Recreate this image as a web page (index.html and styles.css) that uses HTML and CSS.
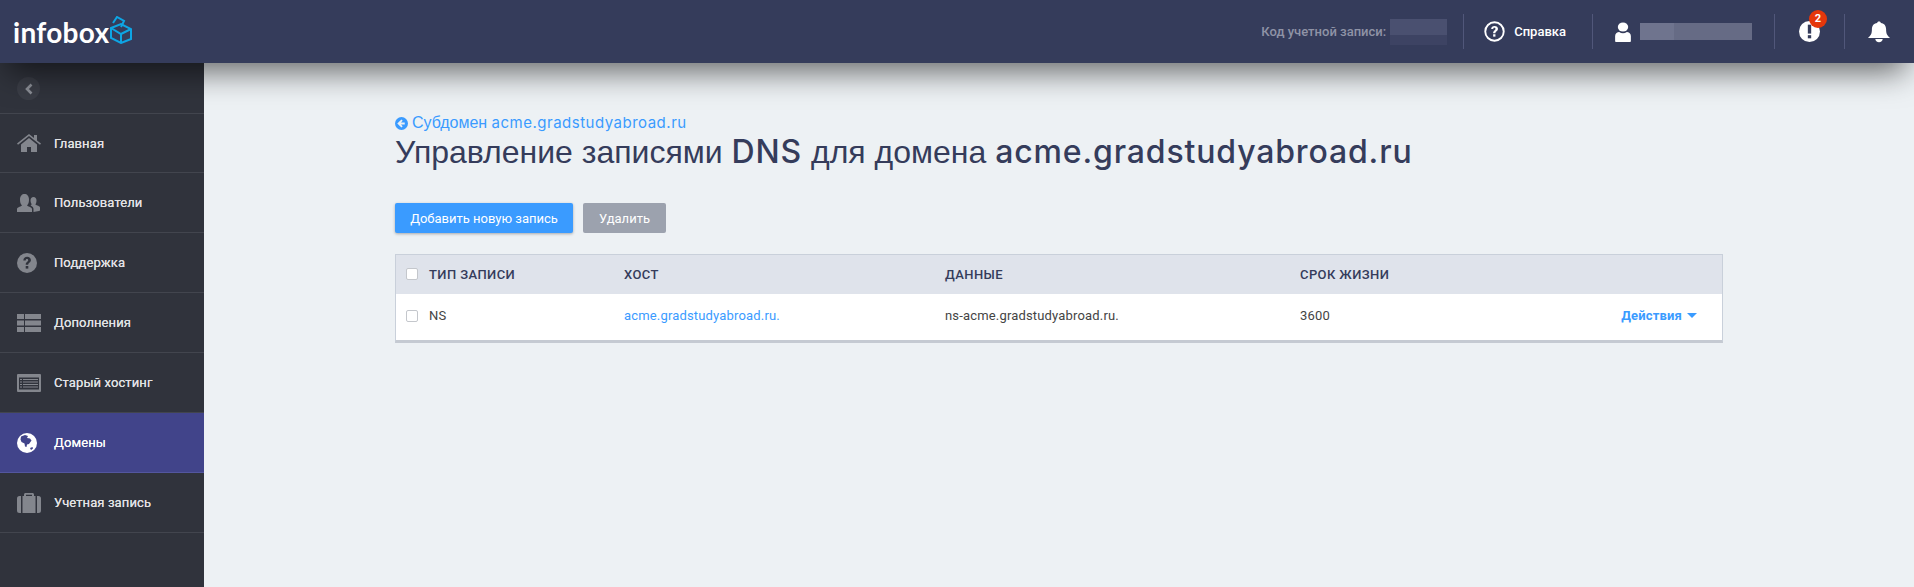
FILE: index.html
```html
<!DOCTYPE html>
<html lang="ru">
<head>
    <meta charset="UTF-8">
    <meta name="viewport" content="width=device-width, initial-scale=1.0">
    <title>Управление записями DNS</title>
    <link rel="stylesheet" href="styles.css">
</head>
<body>
    <header class="top-bar">
        <div class="logo">
            <span>infobox</span>
            <svg class="logo-box" viewBox="0 0 24 28" width="24" height="28" fill="none" stroke="#0ea5e4" stroke-width="2">
                <path d="M4 7 8 1l7 4-3 6"/>
                <path d="M2 12l10-4 10 5v10l-10 4-10-5z"/>
                <path d="M2 12l10 6 10-5M12 18v9"/>
            </svg>
        </div>
        <div class="top-right">
            <div class="top-item account">
                <span>Код учетной записи:</span>
                <div class="blur-id"></div>
            </div>
            <div class="top-item help">
                <svg viewBox="0 0 20 20" width="21" height="21">
                    <circle cx="10" cy="10" r="8.8" fill="none" stroke="#fff" stroke-width="1.8"/>
                    <path d="M6.800 7.600c.1-1.900 1.400-2.900 3.300-2.900 1.900 0 3.200 1.100 3.200 2.700 0 2.400-2.400 2.400-2.400 4.200H8.700c0-2.700 2.200-2.800 2.200-4.100 0-.6-.4-1-1-1-.7 0-1 .5-1.100 1.200z" fill="#fff"/>
                    <rect x="8.700" y="12.600" width="2.200" height="2.300" fill="#fff"/>
                </svg>
                <span>Справка</span>
            </div>
            <div class="top-item user">
                <svg viewBox="0 0 16 20" width="18" height="20" fill="#fff" preserveAspectRatio="none">
                    <circle cx="8" cy="5" r="4.600"/>
                    <path d="M1 19v-5c0-2.600 2-4 3.600-4 1 .8 2.200 1.200 3.400 1.200s2.400-.4 3.400-1.200c1.600 0 3.600 1.400 3.600 4v5c0 .6-.4 1-1 1H2c-.6 0-1-.4-1-1z"/>
                </svg>
                <div class="blur-name"></div>
            </div>
            <div class="top-item alert">
                <svg viewBox="0 0 20 20" width="21" height="21">
                    <circle cx="10" cy="10" r="10" fill="#fff"/>
                    <rect x="8.400" y="3.500" width="3.200" height="8.500" fill="#353c5b"/>
                    <rect x="8.400" y="13.500" width="3.200" height="3" fill="#353c5b"/>
                </svg>
                <span class="badge">2</span>
            </div>
            <div class="top-item bell">
                <svg viewBox="0 0 18 24" width="22" height="24" fill="#fff" preserveAspectRatio="none">
                    <path d="M9 1.500c1 0 1.500.7 1.500 1.500 3 .6 4.300 3 4.300 6 0 5 1 6.500 3.200 9H0c2.200-2.500 3.200-4 3.200-9 0-3 1.300-5.400 4.300-6 0-.8.500-1.500 1.500-1.500z"/>
                    <path d="M6 19h6c0 2-1.300 3.200-3 3.200S6 21 6 19z"/>
                </svg>
            </div>
        </div>
    </header>

    <div class="page">
        <aside class="sidebar">
            <div class="toggle-row">
                <span class="toggle">
                    <svg viewBox="0 0 10 12" width="10" height="12" fill="none" stroke="#8b8e96" stroke-width="2.600">
                        <path d="M7.500 1.500 3 6l4.500 4.500"/>
                    </svg>
                </span>
            </div>
            <nav>
                <a class="nav-item" href="#">
                    <svg viewBox="0 0 24 18" width="24" height="18" fill="#83868d">
                        <path d="M0 9.500 12 0l5 4V1h3v5.500l4 3-1 1.200L12 2 1 10.700z"/>
                        <path d="M4 10.500 12 4l8 6.500V18h-6v-5h-4v5H4z"/>
                    </svg>
                    <span>Главная</span>
                </a>
                <a class="nav-item" href="#">
                    <svg viewBox="0 0 24 18" width="24" height="18" fill="#83868d">
                        <path d="M0 18v-3c0-1.500 3-2.200 5-3.500-1.500-1.500-2-3.500-2-6C3 2 5 0 7.500 0S12 2 12 5.500c0 2.500-.5 4.500-2 6 2 1.300 5 2 5 3.500v3z"/>
                        <path d="M16.500 18v-3c0-1.500-1-2.500-3-3.500 1-.5 1-1 1-1.500-.7-1-1-2.300-1-3.500 0-2 1.200-3.500 3-3.500s3 1.500 3 3.500c0 1.500-.4 3-1.200 4 1.500 1 4.700 1.500 4.700 3v2.500c0 .5-.5 1-1 1z"/>
                    </svg>
                    <span>Пользователи</span>
                </a>
                <a class="nav-item" href="#">
                    <svg class="ic-round" viewBox="0 0 20 20" width="20" height="20">
                        <circle cx="10" cy="10" r="10" fill="#83868d"/>
                        <path d="M6.300 7.400C6.500 5 8 3.800 10.100 3.800c2.200 0 3.800 1.400 3.800 3.200 0 2.700-2.700 2.700-2.700 4.800H8.700c0-3.100 2.500-3.100 2.500-4.600 0-.7-.5-1.100-1.200-1.100-.8 0-1.200.5-1.300 1.400z" fill="#30333c"/>
                        <rect x="8.700" y="13" width="2.600" height="2.600" fill="#30333c"/>
                    </svg>
                    <span>Поддержка</span>
                </a>
                <a class="nav-item" href="#">
                    <svg viewBox="0 0 24 18" width="24" height="18" fill="#83868d">
                        <path d="M0 0h7v5H0zM8 0h16v5H8zM0 6.500h7v5H0zM8 6.500h16v5H8zM0 13h7v5H0zM8 13h16v5H8z"/>
                    </svg>
                    <span>Дополнения</span>
                </a>
                <a class="nav-item" href="#">
                    <svg viewBox="0 0 24 18" width="24" height="18">
                        <rect width="24" height="18" rx="1" fill="#83868d"/>
                        <rect x="2" y="3.500" width="20" height="12" fill="#30333c"/>
                        <path d="M3 5h2v1H3zM6 5h15v1H6zM3 7.500h2v1H3zM6 7.500h15v1H6zM3 10h2v1H3zM6 10h15v1H6zM3 12.500h2v1H3zM6 12.500h15v1H6z" fill="#83868d"/>
                    </svg>
                    <span>Старый хостинг</span>
                </a>
                <a class="nav-item active" href="#">
                    <svg class="ic-round" viewBox="0 0 20 20" width="20" height="20">
                        <circle cx="10" cy="10" r="10" fill="#fff"/>
                        <path d="M4 3.500 8 2l3 1-1 2 3 .5 1.500 2-2.500 3.500-2 .5-.5 2.500-1.500-.5-.5-3-3-1.500-1-2.500zM13 15l2.500-1 .5 1.500-2 1.500z" fill="#41448a"/>
                    </svg>
                    <span>Домены</span>
                </a>
                <a class="nav-item" href="#">
                    <svg viewBox="0 0 24 20" width="24" height="20" fill="#83868d">
                        <path d="M7 3V1.500C7 .700 7.700 0 8.500 0h7c.8 0 1.500.700 1.500 1.500V3h-2V1.800H9V3z"/>
                        <path d="M2.500 3H4v17H2.500A2.500 2.500 0 0 1 0 17.500v-12A2.500 2.500 0 0 1 2.500 3zM5.500 3h13v17h-13zM20 3h1.500A2.500 2.500 0 0 1 24 5.500v12a2.500 2.500 0 0 1-2.500 2.500H20z"/>
                    </svg>
                    <span>Учетная запись</span>
                </a>
            </nav>
        </aside>

        <main class="content">
            <a class="back-link" href="#">
                <svg viewBox="0 0 12 12" width="13" height="13">
                    <circle cx="6" cy="6" r="6" fill="#3a9bff"/>
                    <path d="M6.500 2.800 3.300 6l3.200 3.200M3.500 6h5.500" fill="none" stroke="#edf1f4" stroke-width="1.700"/>
                </svg>
                <span>Субдомен <b>acme.gradstudyabroad.ru</b></span>
            </a>
            <h1>Управление записями <b>DNS</b> для домена <b>acme.gradstudyabroad.ru</b></h1>

            <div class="actions">
                <button class="btn btn-primary">Добавить новую запись</button>
                <button class="btn btn-gray">Удалить</button>
            </div>

            <div class="records">
                <div class="records-row records-head">
                    <div class="col-type"><span class="check"></span>ТИП ЗАПИСИ</div>
                    <div class="col-host">ХОСТ</div>
                    <div class="col-data">ДАННЫЕ</div>
                    <div class="col-ttl">СРОК ЖИЗНИ</div>
                </div>
                <div class="records-row records-body">
                    <div class="col-type"><span class="check"></span>NS</div>
                    <div class="col-host"><a href="#">acme.gradstudyabroad.ru.</a></div>
                    <div class="col-data">ns-acme.gradstudyabroad.ru.</div>
                    <div class="col-ttl">3600</div>
                    <div class="col-menu"><a href="#">Действия<i class="caret"></i></a></div>
                </div>
            </div>
        </main>
    </div>
</body>
</html>
```

FILE: styles.css
```css
* {
    margin: 0;
    padding: 0;
    box-sizing: border-box;
}

html, body {
    height: 100%;
    overflow: hidden;
}

body {
    display: flex;
    flex-direction: column;
    background-color: #edf1f4;
    font-family: Roboto, "Liberation Sans", sans-serif;
    font-size: 13px;
}

a {
    text-decoration: none;
}

.top-bar {
    position: relative;
    z-index: 2;
    flex: 0 0 63px;
    display: flex;
    justify-content: space-between;
    align-items: center;
    padding-left: 13px;
    background-color: #353c5b;
    box-shadow: 0 16px 32px -8px rgba(0, 0, 0, 0.6);
}

.logo {
    display: flex;
    align-items: center;
    gap: 0;
    color: white;
    font-family: Lato, sans-serif;
    font-size: 28px;
    font-weight: 700;
    letter-spacing: 0.3px;
}

.logo-box {
    margin-top: -3px;
}

.top-right {
    display: flex;
    align-items: center;
    color: white;
}

.top-item {
    display: flex;
    align-items: center;
    height: 35px;
    border-right: 1px solid #51577a;
}

.account {
    padding-right: 16px;
    color: #8f93a6;
    font-weight: 500;
}

.blur-id {
    width: 57px;
    height: 26px;
    margin-left: 4px;
    background: linear-gradient(#4a5070 60%, #3d4363 60%);
}

.help {
    gap: 9px;
    padding: 0 26px 0 20px;
    font-weight: 500;
}

.user {
    gap: 8px;
    padding: 0 22px 0 21px;
}

.blur-name {
    width: 112px;
    height: 17px;
    background: linear-gradient(90deg, #6f748e 30%, #666b85 30%);
}

.alert {
    position: relative;
    padding: 0 24px 0 24px;
}

.badge {
    position: absolute;
    top: -4px;
    left: 34px;
    width: 18px;
    height: 18px;
    border-radius: 50%;
    background-color: #e5370b;
    color: white;
    font-size: 11px;
    font-weight: 700;
    line-height: 18px;
    text-align: center;
}

.bell {
    padding: 0 24px 0 23px;
    border-right: none;
}

.page {
    flex: 1;
    display: flex;
    min-height: 0;
}

.sidebar {
    flex: 0 0 204px;
    background-color: #30333c;
}

.toggle-row {
    height: 51px;
    padding: 14px 0 0 17px;
    border-bottom: 1px solid #42454e;
}

.toggle {
    display: flex;
    align-items: center;
    justify-content: center;
    width: 23px;
    height: 23px;
    border-radius: 50%;
    background-color: #3a3d46;
}

.nav-item {
    display: flex;
    align-items: center;
    gap: 13px;
    height: 60px;
    padding-left: 17px;
    border-bottom: 1px solid #42454e;
    color: #e1e2e4;
    font-weight: 400;
    letter-spacing: 0.1px;
    text-shadow: 0 0 0.4px #e1e2e4;
}

.nav-item:first-child {
    height: 59px;
}

.nav-item.active {
    background-color: #41448a;
    border-bottom-color: #53569e;
    color: white;
}

.ic-round {
    margin-right: 4px;
}

.content {
    flex: 1;
    padding: 50px 191px 0;
}

.back-link {
    display: flex;
    align-items: center;
    gap: 4px;
    color: #3a9bff;
    font-family: "Liberation Sans", sans-serif;
    font-size: 16px;
    line-height: 20px;
}

.back-link b {
    font-family: Inter, sans-serif;
    font-size: 15px;
    font-weight: 400;
    letter-spacing: 0.5px;
}

h1 {
    margin-top: -1px;
    color: #353c5b;
    font-family: "Liberation Sans", sans-serif;
    font-size: 32px;
    font-weight: 400;
    line-height: 40px;
}

h1 b {
    font-family: Inter, sans-serif;
    font-size: 32px;
    font-weight: 500;
    letter-spacing: 0.85px;
}

.actions {
    display: flex;
    gap: 10px;
    margin-top: 31px;
}

.btn {
    height: 30px;
    border: none;
    border-radius: 2px;
    color: white;
    font-family: Roboto, sans-serif;
    font-size: 13px;
    font-weight: 400;
}

.btn-primary {
    width: 178px;
    background-color: #3a9bff;
    box-shadow: 0 1px 3px rgba(0, 0, 0, 0.3);
}

.btn-gray {
    width: 83px;
    background-color: #9ca2ae;
}

.records {
    margin-top: 21px;
    border: 1px solid #c9d0da;
    border-bottom: 3px solid #c5cad2;
    background-color: white;
}

.records-row {
    display: grid;
    grid-template-columns: 218px 321px 355px 320px 1fr;
    align-items: center;
    padding-left: 10px;
}

.records-head {
    height: 39px;
    padding-bottom: 1px;
    background-color: #dfe3eb;
    color: #353c5b;
    font-weight: 500;
    letter-spacing: 0.4px;
}

.records-body {
    height: 46px;
    padding-bottom: 3px;
    color: #444;
    letter-spacing: 0.17px;
}

.col-type {
    display: flex;
    align-items: center;
    gap: 11px;
}

.check {
    width: 12px;
    height: 12px;
    border: 1px solid #c4c7cc;
    border-radius: 2px;
    background-color: white;
}

.col-host a {
    color: #3a9bff;
}

.col-menu {
    padding-right: 25px;
    text-align: right;
    white-space: nowrap;
}

.col-menu a {
    color: #3a9bff;
    font-weight: 700;
}

.caret {
    display: inline-block;
    margin-left: 5px;
    vertical-align: 2px;
    border-top: 5px solid #3a9bff;
    border-left: 5px solid transparent;
    border-right: 5px solid transparent;
}
```
